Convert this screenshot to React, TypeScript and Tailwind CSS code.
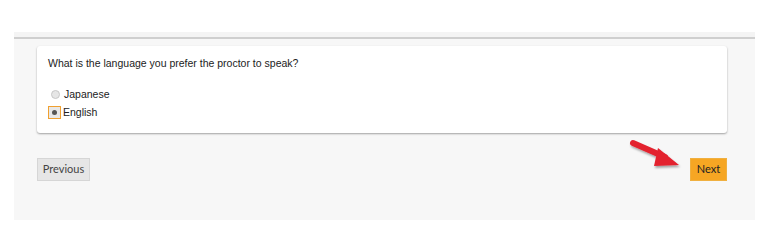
export default function App() {
  return (
    <div className="w-[768px] h-[240px] bg-white pt-[32px] px-[14px] font-['Liberation_Sans',sans-serif]">
      <div className="w-[741px] h-[188px] bg-[#f7f7f7]">
        <div className="h-[5px] bg-[#f4f4f4]" />
        <div className="h-[2px] bg-[#cfcfcf]" />
        <div className="pl-[23px] pr-[28px] pt-[7px]">
          <div className="h-[87px] bg-white rounded-[3px] shadow-[0_1px_2px_rgba(0,0,0,0.35)] pl-[11px] pt-[11px] text-[10.5px] leading-[13px] text-[#222]">
            <div>What is the language you prefer the proctor to speak?</div>
            <div className="mt-[18px] flex items-center gap-[4px]">
              <span className="w-[9px] h-[9px] rounded-full border border-[#c8c8c8] bg-[#e6e6e6] ml-[3px]" />
              <span>Japanese</span>
            </div>
            <div className="mt-[5px] flex items-center gap-[2px]">
              <span className="w-[13px] h-[13px] border border-[#f0a030] bg-[#e8e8e8] flex items-center justify-center">
                <span className="w-[5px] h-[5px] rounded-full bg-[#555]" />
              </span>
              <span>English</span>
            </div>
          </div>
          <div className="mt-[25px] flex items-start justify-between">
            <button className="w-[53px] h-[23px] bg-[#e6e6e6] border border-[#d6d6d6] text-[11px] text-[#444] font-['Lato',sans-serif]">
              Previous
            </button>
            <div className="flex items-start">
              <svg width="64" height="34" viewBox="0 0 64 34" className="-mt-[19px] mr-[1px]">
                <defs>
                  <filter id="sh" x="-20%" y="-20%" width="140%" height="160%">
                    <feDropShadow dx="1" dy="2" stdDeviation="1.2" floodColor="#000" floodOpacity="0.35" />
                  </filter>
                </defs>
                <g filter="url(#sh)">
                  <line x1="8" y1="4" x2="40" y2="18" stroke="#e3212f" strokeWidth="6" strokeLinecap="round" />
                  <polygon points="33,9 54,26 29,27" fill="#e3212f" />
                </g>
              </svg>
              <button className="w-[37px] h-[23px] bg-[#f6a623] border border-[#f0b040] text-[11px] text-[#222] font-['Lato',sans-serif]">
                Next
              </button>
            </div>
          </div>
        </div>
      </div>
    </div>
  )
}
